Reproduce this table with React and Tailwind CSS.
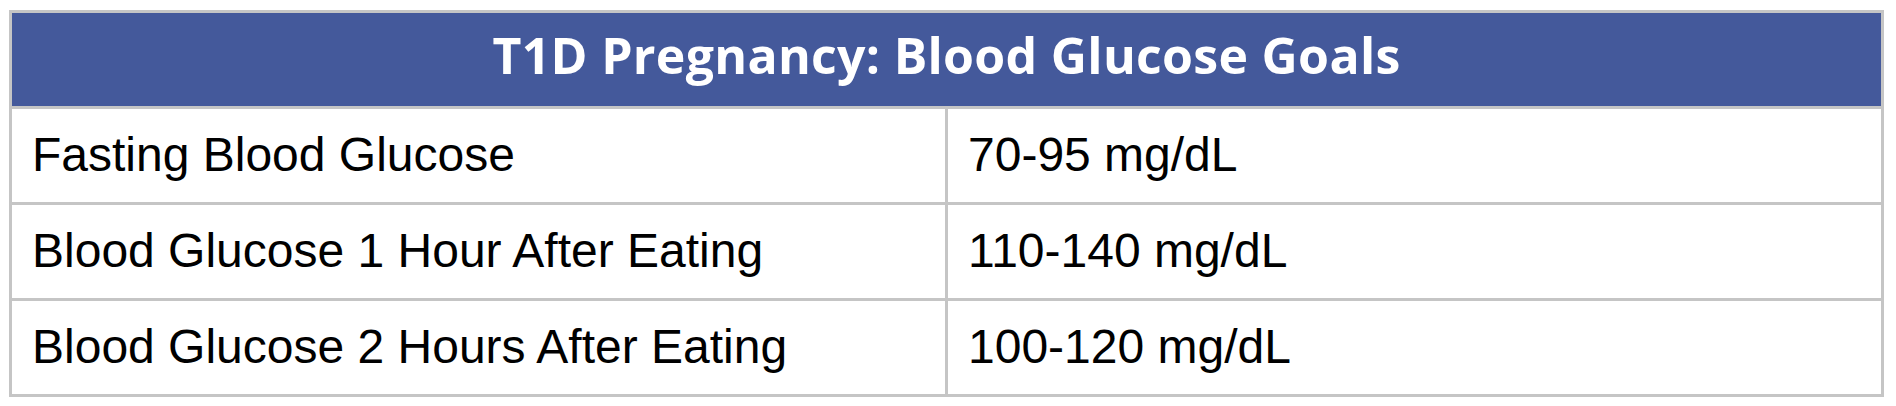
import React from "react";

const rows = [
  { label: "Fasting Blood Glucose", value: "70-95 mg/dL" },
  { label: "Blood Glucose 1 Hour After Eating", value: "110-140 mg/dL" },
  { label: "Blood Glucose 2 Hours After Eating", value: "100-120 mg/dL" },
];

const App = () => {
  return (
    <div className="bg-white w-[1896px] h-[406px] pt-[10px] pl-[9px]">
      <div className="w-[1875px] border-[3px] border-[#c5c5c5] bg-white">
        {/* Header */}
        <div className="h-[93px] bg-[#44599b] flex items-center justify-center pb-[8px]">
          <h2
            className="text-white text-[50px] font-bold tracking-[0.3px]"
            style={{ fontFamily: '"Open Sans", "Liberation Sans", sans-serif' }}
          >
            T1D Pregnancy: Blood Glucose Goals
          </h2>
        </div>

        {/* Rows */}
        {rows.map((row) => (
          <div
            key={row.label}
            className="grid grid-cols-[936px_1fr] border-t-[3px] border-[#c5c5c5] h-[96px]"
          >
            <div
              className="flex items-center pl-[20px] pb-[2px] text-black text-[48px] border-r-[3px] border-[#c5c5c5]"
              style={{ fontFamily: '"Liberation Sans", Arial, sans-serif' }}
            >
              {row.label}
            </div>
            <div
              className="flex items-center pl-[20px] pb-[2px] text-black text-[48px]"
              style={{ fontFamily: '"Liberation Sans", Arial, sans-serif' }}
            >
              {row.value}
            </div>
          </div>
        ))}
      </div>
    </div>
  );
};

export default App;
